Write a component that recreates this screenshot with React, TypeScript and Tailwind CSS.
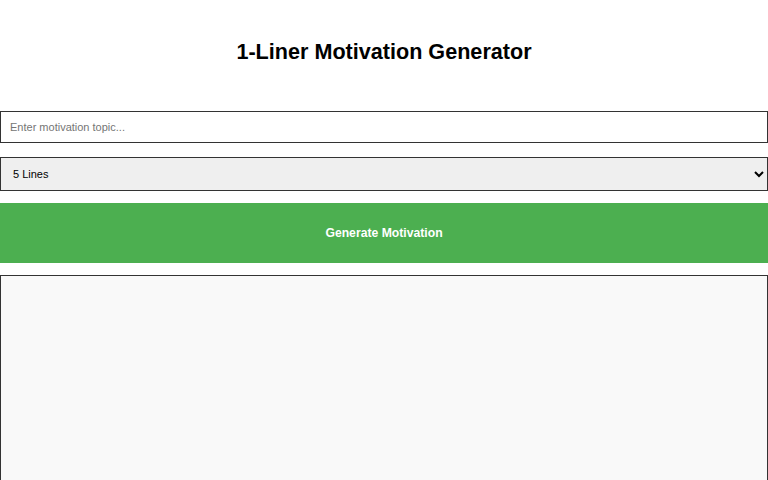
import { useState } from "react";

export default function App() {
  const [topic, setTopic] = useState("");
  const [lines, setLines] = useState("5");

  return (
    <div className="min-h-screen bg-white font-['Liberation_Sans',Arial,sans-serif] text-black">
      <h1 className="pt-[38px] pb-[45px] text-center text-[21.6px] font-bold leading-[28px]">
        1-Liner Motivation Generator
      </h1>

      <div className="flex flex-col">
        <input
          type="text"
          value={topic}
          onChange={(e) => setTopic(e.target.value)}
          placeholder="Enter motivation topic..."
          className="h-[32px] w-full border border-[#333] px-[9px] text-[11px] placeholder:text-[#757575] outline-none"
        />

        <select
          value={lines}
          onChange={(e) => setLines(e.target.value)}
          className="mt-[14px] h-[34px] w-full border border-[#333] bg-[#efefef] px-[8px] text-[11px]"
        >
          <option value="1">1 Line</option>
          <option value="3">3 Lines</option>
          <option value="5">5 Lines</option>
          <option value="10">10 Lines</option>
        </select>

        <button className="mt-[12px] h-[60px] w-full bg-[#4caf50] text-[12.2px] font-bold text-white">
          Generate Motivation
        </button>

        <div className="mt-[12px] h-[220px] w-full border border-[#333] bg-[#f9f9f9]" />
      </div>
    </div>
  );
}
